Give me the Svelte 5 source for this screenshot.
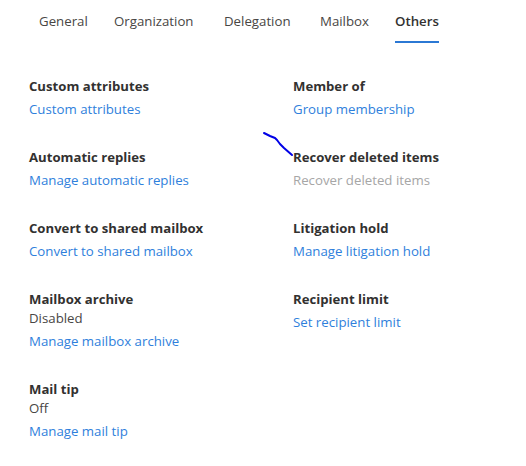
<script>
  const tabs = ['General', 'Organization', 'Delegation', 'Mailbox', 'Others'];
  const left = [
    { title: 'Custom attributes', link: 'Custom attributes' },
    { title: 'Automatic replies', link: 'Manage automatic replies' },
    { title: 'Convert to shared mailbox', link: 'Convert to shared mailbox' },
    { title: 'Mailbox archive', value: 'Disabled', link: 'Manage mailbox archive' },
    { title: 'Mail tip', value: 'Off', link: 'Manage mail tip' }
  ];
  const right = [
    { title: 'Member of', link: 'Group membership' },
    { title: 'Recover deleted items', link: 'Recover deleted items', disabled: true },
    { title: 'Litigation hold', link: 'Manage litigation hold' },
    { title: 'Recipient limit', link: 'Set recipient limit' }
  ];
</script>

{#snippet column(items)}
  <div class="column">
    {#each items as item}
      <section class="group">
        <h3>{item.title}</h3>
        {#if item.value}<p>{item.value}</p>{/if}
        <a href="#top" class:disabled={item.disabled}>{item.link}</a>
      </section>
    {/each}
  </div>
{/snippet}

<div class="panel">
  <nav class="tabs">
    {#each tabs as tab}
      <div class="cell"><span class="tab" class:active={tab === 'Others'}>{tab}</span></div>
    {/each}
  </nav>
  <div class="columns">
    {@render column(left)}
    {@render column(right)}
  </div>
  <svg class="scribble" width="526" height="466" viewBox="0 0 526 466" aria-hidden="true">
    <path d="M264 133 L267 134.5 L270 136 L275 138 L277 140 L280 144 L284 148 L292 155" />
  </svg>
</div>

<style>
  :global(body) {
    margin: 0;
    background: #fff;
  }
  .panel {
    position: relative;
    width: 526px;
    height: 466px;
    overflow: hidden;
    font-family: "Open Sans", "Noto Sans", sans-serif;
    font-size: 13.25px;
    color: #323130;
  }
  .tabs {
    display: grid;
    grid-template-columns: 75px 110px 96px 75px auto;
    justify-content: start;
    padding: 12px 0 0 39px;
  }
  .tab {
    display: inline-block;
    height: 29px;
    line-height: 19px;
    color: #484644;
    border-bottom: 2px solid transparent;
  }
  .tab.active {
    font-weight: 600;
    color: #323130;
    border-bottom-color: #2b78d4;
  }
  .columns {
    display: grid;
    grid-template-columns: 264px 1fr;
    padding: 33px 0 0 29px;
  }
  .column {
    display: flex;
    flex-direction: column;
    gap: 28px;
  }
  .group {
    display: flex;
    flex-direction: column;
  }
  h3 {
    margin: 0;
    font-size: 13.15px;
    line-height: 20px;
    font-weight: 700;
    color: #323130;
  }
  p {
    margin: 0;
    line-height: 19px;
    color: #484644;
  }
  a {
    margin-top: 3px;
    line-height: 20px;
    color: #2f7fdc;
    text-decoration: none;
  }
  a.disabled {
    color: #a6a6a6;
  }
  .scribble {
    position: absolute;
    top: 0;
    left: 0;
    pointer-events: none;
  }
  .scribble path {
    fill: none;
    stroke: #0000e6;
    stroke-width: 2;
    stroke-linejoin: round;
    stroke-linecap: round;
  }
</style>
